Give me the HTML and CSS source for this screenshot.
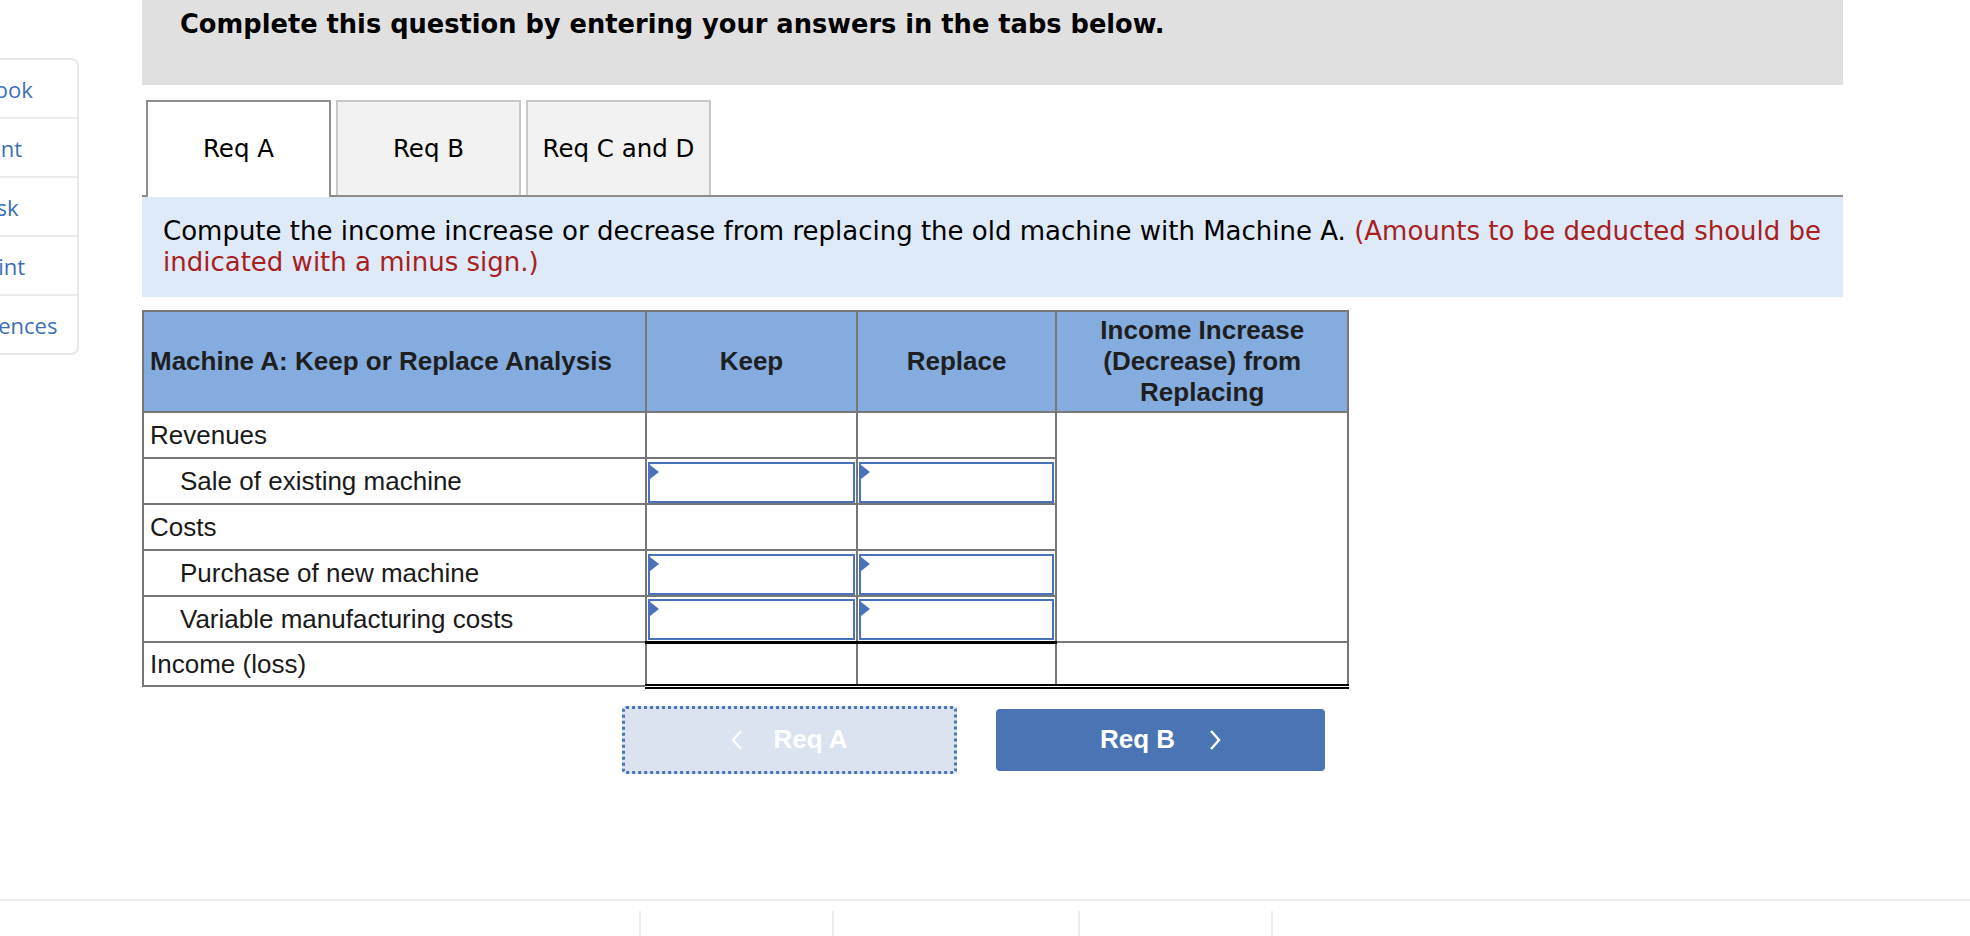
FILE: index.html
```html
<!DOCTYPE html>
<html lang="en">
<head>
  <meta charset="UTF-8">
  <title>Req A</title>
  <link rel="stylesheet" href="styles.css">
</head>
<body>

  <div class="layout">
    <!-- side tools -->
    <aside class="sidebar">
      <div class="side-item">eBook</div>
      <div class="side-item">Hint</div>
      <div class="side-item">Ask</div>
      <div class="side-item">Print</div>
      <div class="side-item">References</div>
    </aside>

    <main class="question">
      <div class="prompt">Complete this question by entering your answers in the tabs below.</div>

      <div class="tabs">
        <div class="tab active">Req A</div>
        <div class="tab">Req B</div>
        <div class="tab">Req C and D</div>
      </div>

      <div class="instructions">
        Compute the income increase or decrease from replacing the old machine with Machine A.
        <span class="note">(Amounts to be deducted should be indicated with a minus sign.)</span>
      </div>

      <table class="analysis">
        <colgroup>
          <col class="c-label">
          <col class="c-keep">
          <col class="c-replace">
          <col class="c-diff">
        </colgroup>
        <thead>
          <tr>
            <th class="th-label">Machine A: Keep or Replace Analysis</th>
            <th>Keep</th>
            <th>Replace</th>
            <th>Income Increase<br>(Decrease) from<br>Replacing</th>
          </tr>
        </thead>
        <tbody>
          <tr>
            <td class="label">Revenues</td>
            <td></td>
            <td></td>
            <td class="diff" rowspan="5"></td>
          </tr>
          <tr>
            <td class="label indent">Sale of existing machine</td>
            <td class="entry"><div class="field"></div></td>
            <td class="entry"><div class="field"></div></td>
          </tr>
          <tr>
            <td class="label">Costs</td>
            <td></td>
            <td></td>
          </tr>
          <tr>
            <td class="label indent">Purchase of new machine</td>
            <td class="entry"><div class="field"></div></td>
            <td class="entry"><div class="field"></div></td>
          </tr>
          <tr>
            <td class="label indent">Variable manufacturing costs</td>
            <td class="entry"><div class="field"></div></td>
            <td class="entry"><div class="field"></div></td>
          </tr>
          <tr class="total-row">
            <td class="label">Income (loss)</td>
            <td class="total"></td>
            <td class="total"></td>
            <td class="total-diff"></td>
          </tr>
        </tbody>
      </table>

      <div class="nav">
        <button class="nav-btn prev">
          <svg width="12" height="22" viewBox="0 0 12 22"><polyline points="10,2 2,11 10,20" fill="none" stroke="#fff" stroke-width="2.4"/></svg>
          <span>Req A</span>
        </button>
        <button class="nav-btn next">
          <span>Req B</span>
          <svg width="12" height="22" viewBox="0 0 12 22"><polyline points="2,2 10,11 2,20" fill="none" stroke="#fff" stroke-width="2.4"/></svg>
        </button>
      </div>
    </main>
  </div>

  <footer class="footer">
    <div class="footer-cells">
      <div class="footer-cell w1"></div>
      <div class="footer-cell w2"></div>
      <div class="footer-cell w1 last"></div>
    </div>
  </footer>

</body>
</html>
```

FILE: styles.css
```css
body {
  margin: 0;
  background: #fff;
  color: #000;
  font-family: "DejaVu Sans", Verdana, sans-serif;
}

.layout {
  display: flex;
  align-items: flex-start;
}

/* SIDEBAR */
.sidebar {
  box-sizing: border-box;
  width: 157px;
  margin-left: -78px;
  margin-top: 58px;
  border: 2px solid #e8e8e8;
  border-radius: 0 8px 8px 0;
  font-family: "Open Sans", sans-serif;
  font-size: 22px;
  color: #3d6fb5;
}

.side-item {
  height: 57px;
  display: flex;
  align-items: center;
  justify-content: center;
  border-bottom: 2px solid #ebebeb;
}

.side-item:last-child {
  border-bottom: none;
}

/* QUESTION */
.question {
  width: 1701px;
  margin-left: 63px;
}

.prompt {
  box-sizing: border-box;
  height: 85px;
  padding: 9px 38px;
  background: #e0e0e0;
  font-size: 25.7px;
  font-weight: bold;
  line-height: 30px;
}

.tabs {
  display: flex;
  gap: 5px;
  margin-top: 15px;
  padding-left: 4px;
  border-bottom: 2px solid #8c8c8c;
}

.tab {
  box-sizing: border-box;
  width: 185px;
  height: 95px;
  display: flex;
  align-items: center;
  justify-content: center;
  background: #f2f2f2;
  border: 2px solid #c8c8c8;
  border-bottom: none;
  font-size: 24.5px;
}

.tab.active {
  height: 97px;
  margin-bottom: -2px;
  padding-bottom: 2px;
  background: #fff;
  border-color: #8f8f8f;
}

.instructions {
  padding: 19px 8px 19px 21px;
  background: #deeaf7;
  font-size: 26px;
  line-height: 31px;
}

.note {
  color: #a8201e;
}

/* TABLE */
.analysis {
  width: 1207px;
  margin-top: 13px;
  border-collapse: collapse;
  font-family: "Liberation Sans", Arial, sans-serif;
  font-size: 26px;
  color: #1a1a1a;
}

.c-label { width: 504px; }
.c-keep { width: 211px; }
.c-replace { width: 200px; }
.c-diff { width: 292px; }

.analysis th,
.analysis td {
  border: 2px solid #777;
  padding: 0;
}

.analysis th {
  height: 99px;
  background: #84acdf;
  font-weight: bold;
  line-height: 31px;
  text-align: center;
  color: #1f1f1f;
}

.analysis th.th-label {
  text-align: left;
  padding-left: 6px;
}

.analysis td {
  height: 44px;
  background: #fff;
  line-height: 30px;
}

.analysis td.label {
  padding-left: 6px;
}

.analysis td.indent {
  padding-left: 36px;
}

.analysis td.entry {
  height: 41px;
  padding: 2px 1px 0;
}

.field {
  position: relative;
  box-sizing: border-box;
  height: 41px;
  border: 2px solid #4a72b8;
}

.field::before {
  content: "";
  position: absolute;
  left: 0;
  top: 1px;
  border-left: 9px solid #4a72b8;
  border-top: 7px solid transparent;
  border-bottom: 7px solid transparent;
}

.analysis .total-row td {
  height: 40px;
}

.analysis td.total {
  border-top: 3px solid #000;
  border-bottom: 5px double #000;
}

.analysis td.total-diff {
  border-bottom: 5px double #000;
}

/* NAV BUTTONS */
.nav {
  display: flex;
  align-items: center;
  gap: 39px;
  margin-top: 17px;
  padding-left: 480px;
}

.nav-btn {
  box-sizing: border-box;
  display: flex;
  align-items: center;
  justify-content: center;
  border-radius: 4px;
  font-family: "Liberation Sans", Arial, sans-serif;
  font-size: 26px;
  font-weight: bold;
  color: #fff;
}

.nav-btn.prev {
  width: 335px;
  height: 68px;
  gap: 30px;
  background: #dae3ef;
  border: 3px dotted #4a74b6;
}

.nav-btn.next {
  width: 329px;
  height: 62px;
  gap: 34px;
  background: #4a74b4;
  border: none;
}

/* FOOTER */
.footer {
  margin-top: 125px;
  padding-top: 10px;
  border-top: 2px solid #eeeeee;
}

.footer-cells {
  display: flex;
  margin-left: 639px;
}

.footer-cell {
  height: 30px;
  border-left: 2px solid #ececec;
}

.footer-cell.w1 { width: 191px; }
.footer-cell.w2 { width: 244px; }

.footer-cell.last {
  border-right: 2px solid #ececec;
}
```
